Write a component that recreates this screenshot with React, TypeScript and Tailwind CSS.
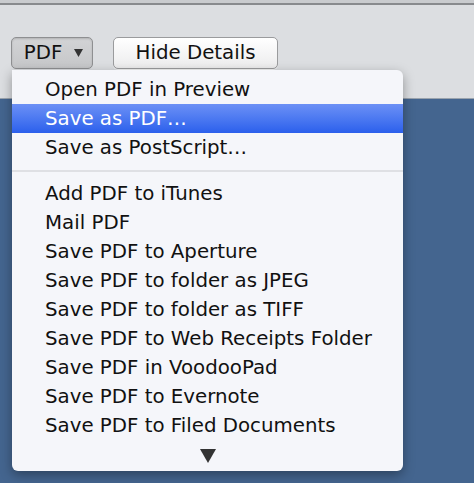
import React from 'react';

const topItems = ['Open PDF in Preview', 'Save as PDF…', 'Save as PostScript…'];
const moreItems = [
  'Add PDF to iTunes',
  'Mail PDF',
  'Save PDF to Aperture',
  'Save PDF to folder as JPEG',
  'Save PDF to folder as TIFF',
  'Save PDF to Web Receipts Folder',
  'Save PDF in VoodooPad',
  'Save PDF to Evernote',
  'Save PDF to Filed Documents',
];

function MenuRow({ label, active }: { label: string; active?: boolean }) {
  return (
    <div
      className={`h-[29px] flex items-center pl-[33px] whitespace-nowrap ${
        active ? 'bg-gradient-to-b from-[#6c90f5] to-[#2b5fec] text-white' : 'text-[#111]'
      }`}
    >
      {label}
    </div>
  );
}

export default function App() {
  return (
    <div
      className="relative w-[474px] h-[483px] overflow-hidden bg-[#44658f] text-[19.8px] leading-none"
      style={{ fontFamily: '"DejaVu Sans", "Liberation Sans", sans-serif' }}
    >
      {/* sheet toolbar */}
      <div className="h-[99px] bg-[#dcdee1] border-b border-[#9aa3ad] flex flex-col">
        <div className="h-[3px] bg-[#c9cbce]" />
        <div className="h-[2px] bg-[#888a8d]" />
        <div className="flex gap-[20px] pl-[11px] pt-[32px]">
          <div className="w-[82px] h-[32px] rounded-[5px] border border-[#8e8f91] bg-gradient-to-b from-[#d2d3d5] to-[#c6c7c9] flex items-center justify-center gap-[12px] pl-[3px] text-[#111] shadow-[inset_0_1px_2px_rgba(0,0,0,0.15)]">
            <span>PDF</span>
            <svg width="9" height="8" viewBox="0 0 9 8">
              <path d="M0 0 L9 0 L4.5 8 Z" fill="#333" />
            </svg>
          </div>
          <div className="w-[165px] h-[32px] rounded-[5px] border border-[#9a9b9d] bg-gradient-to-b from-[#ffffff] to-[#ececed] flex items-center justify-center text-[#111] shadow-[0_1px_0_rgba(255,255,255,0.6)]">
            Hide Details
          </div>
        </div>
      </div>

      {/* popup menu */}
      <div className="absolute left-[12px] top-[70px] w-[391px] h-[401px] rounded-b-[6px] rounded-tr-[6px] bg-[#f5f6fa] shadow-[0_4px_12px_rgba(0,0,0,0.35)] pt-[5px] flex flex-col">
        {topItems.map((t, i) => (
          <MenuRow key={t} label={t} active={i === 1} />
        ))}
        <div className="h-[17px] flex items-center">
          <div className="w-full h-[2px] bg-[#dfe0e4]" />
        </div>
        {moreItems.map((t) => (
          <MenuRow key={t} label={t} />
        ))}
        <div className="flex-1 flex items-center justify-center">
          <svg width="16" height="14" viewBox="0 0 16 14">
            <path d="M0 0 L16 0 L8 14 Z" fill="#333" />
          </svg>
        </div>
      </div>
    </div>
  );
}
